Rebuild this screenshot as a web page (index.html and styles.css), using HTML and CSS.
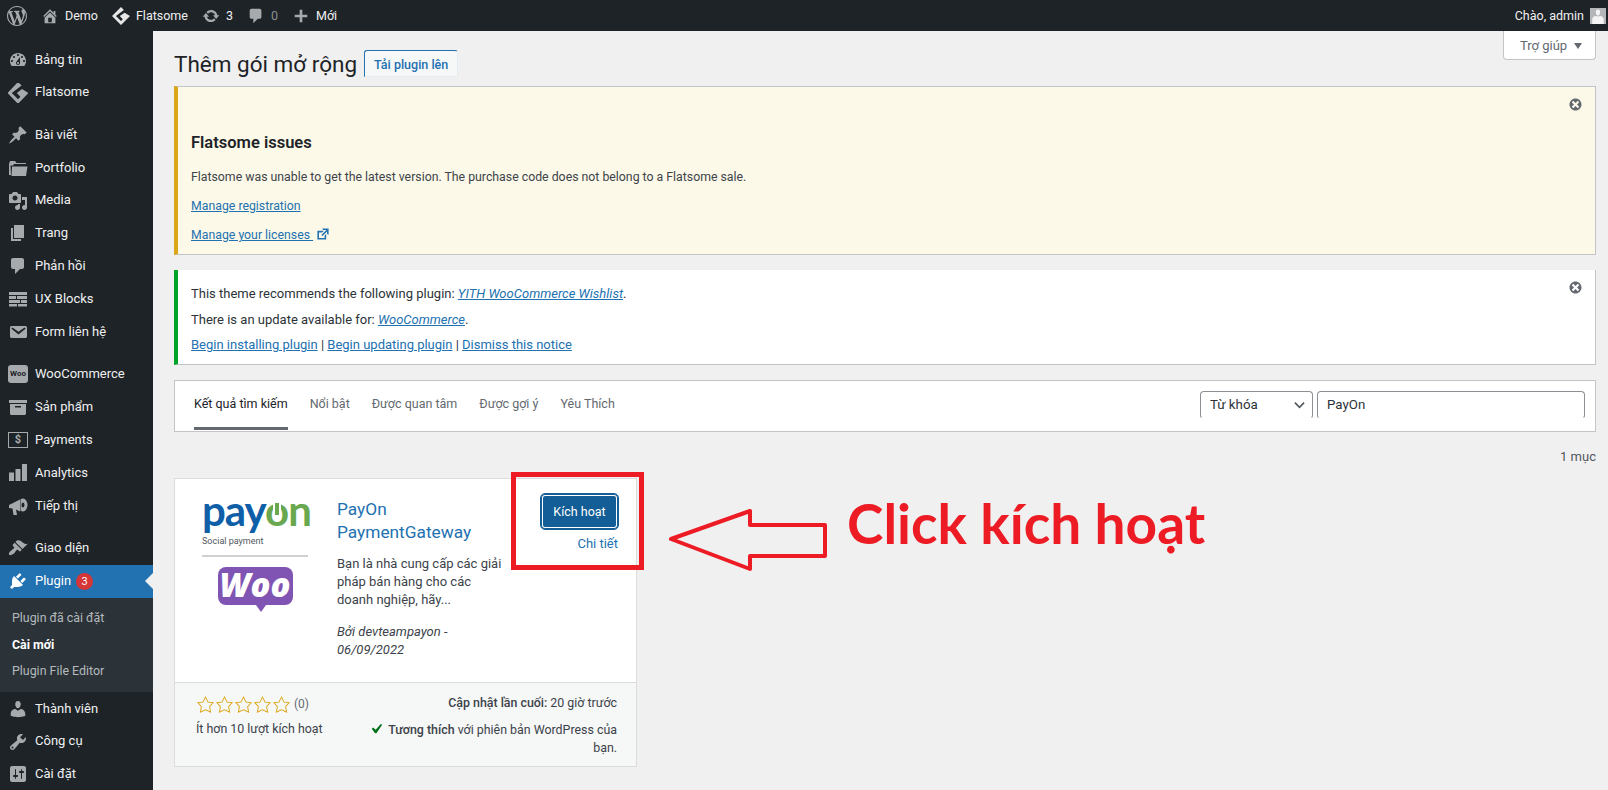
FILE: index.html
```html
<!DOCTYPE html>
<html lang="vi">
<head>
    <meta charset="UTF-8">
    <title>Thêm gói mở rộng</title>
    <link rel="stylesheet" href="styles.css">
</head>
<body>
    <!-- Top admin bar -->
    <header class="adminbar">
        <a class="bar-item bar-logo"><svg class="ico" viewBox="0 0 20 20"><path d="M20 10c0-5.51-4.49-10-10-10C4.48 0 0 4.49 0 10c0 5.52 4.48 10 10 10 5.51 0 10-4.48 10-10zM7.78 15.37L4.37 6.22c.55-.02 1.17-.08 1.17-.08.5-.06.44-1.13-.06-1.11 0 0-1.45.11-2.37.11-.18 0-.37 0-.58-.01C4.12 2.69 6.87 1.11 10 1.11c2.33 0 4.45.87 6.05 2.34-.68-.11-1.65.39-1.65 1.58 0 .74.45 1.36.9 2.1.35.61.55 1.36.55 2.46 0 1.49-1.4 5-1.4 5l-3.03-8.37c.54-.02.82-.17.82-.17.5-.05.44-1.25-.06-1.22 0 0-1.44.12-2.38.12-.87 0-2.33-.12-2.33-.12-.5-.03-.56 1.2-.06 1.22l.92.08 1.26 3.41zM17.41 10c.24-.64.74-1.87.43-4.25.7 1.29 1.05 2.71 1.05 4.25 0 3.29-1.73 6.24-4.4 7.78.97-2.59 1.94-5.2 2.92-7.78zM6.1 18.09C3.12 16.65 1.11 13.53 1.11 10c0-1.3.23-2.48.72-3.59C3.25 10.3 4.67 14.2 6.1 18.09zm4.03-6.63l2.58 6.98c-.86.29-1.76.45-2.71.45-.79 0-1.57-.11-2.29-.33.81-2.38 1.62-4.74 2.42-7.1z"/></svg></a>
        <a class="bar-item"><svg class="ico" viewBox="0 0 20 20"><path d="M16 8.5l1.53 1.53-1.06 1.06L10 4.62l-6.47 6.47-1.06-1.06L10 2.5l4 4v-2h2v4zm-6-2.46l6 5.99V18H4v-5.97zM12 17v-5H8v5h4z"/></svg>Demo</a>
        <a class="bar-item"><svg class="ico ico-light" viewBox="0 0 20 20"><path d="M10 0l3.2 3.2L4.4 10l5.6 5.6 2-2-3.4-3.6L14 6.4 20 10l-10 10L0 10z"/></svg>Flatsome</a>
        <a class="bar-item"><svg class="ico" viewBox="0 0 20 20"><path d="M10.2 3.28c3.53 0 6.43 2.61 6.92 6h2.08l-3.5 4-3.5-4h2.32c-.45-1.97-2.21-3.45-4.32-3.45-1.45 0-2.73.71-3.54 1.78L4.95 5.66C6.23 4.2 8.11 3.28 10.2 3.28zm-.4 13.44c-3.52 0-6.43-2.61-6.92-6H.8l3.5-4c1.17 1.33 2.33 2.67 3.5 4H5.48c.45 1.97 2.21 3.45 4.32 3.45 1.45 0 2.73-.71 3.54-1.78l1.71 1.95c-1.28 1.46-3.15 2.38-5.25 2.38z"/></svg>3</a>
        <a class="bar-item bar-dim"><svg class="ico" viewBox="0 0 20 20"><path d="M5 2h9c1.1 0 2 .9 2 2v7c0 1.1-.9 2-2 2h-2l-5 5v-5H5c-1.1 0-2-.9-2-2V4c0-1.1.9-2 2-2z"/></svg>0</a>
        <a class="bar-item"><svg class="ico" viewBox="0 0 20 20"><path d="M17 8.5v3h-5.5V17h-3v-5.5H3v-3h5.5V3h3v5.500z"/></svg>Mới</a>
        <a class="bar-user">Chào, admin<span class="avatar"><svg viewBox="0 0 20 20"><path d="M10 9.25c-2.27 0-2.73-3.44-2.73-3.44C7 4.02 7.82 2 9.97 2c2.16 0 2.98 2.02 2.71 3.81 0 0-.41 3.44-2.68 3.44zm0 1.5l2.72-.75c2.39 0 4.52 2.33 4.52 4.53V20H2.76v-5.47c0-2.25 1.94-4.48 4.47-4.48z"/></svg></span></a>
    </header>

    <div class="layout">
        <!-- Left menu -->
        <nav class="sidebar">
            <a class="menu-item"><svg class="ico" viewBox="0 0 20 20"><path d="M3.76 16h12.48c1.1-1.37 1.76-3.11 1.76-5 0-4.42-3.58-8-8-8s-8 3.58-8 8c0 1.89.66 3.63 1.76 5zM10 4c.55 0 1 .45 1 1s-.45 1-1 1-1-.45-1-1 .45-1 1-1zM6 6c.55 0 1 .45 1 1s-.45 1-1 1-1-.45-1-1 .45-1 1-1zm8 0c.55 0 1 .45 1 1s-.45 1-1 1-1-.45-1-1 .45-1 1-1zm-5.37 5.55L12 7v6c0 1.1-.9 2-2 2s-2-.9-2-2c0-.57.24-1.08.63-1.45zM4 10c.55 0 1 .45 1 1s-.45 1-1 1-1-.45-1-1 .45-1 1-1zm12 0c.55 0 1 .45 1 1s-.45 1-1 1-1-.45-1-1 .45-1 1-1zm-5 3c0-.55-.45-1-1-1s-1 .45-1 1 .45 1 1 1 1-.45 1-1z"/></svg>Bảng tin</a>
            <a class="menu-item"><svg class="ico" viewBox="0 0 20 20"><path d="M10 -1l3.6 3.6L3.8 10l6.2 6.2 2.4-2.4-3.6-3.8L14 6l6.5 4L10 20.8-.6 10z"/></svg>Flatsome</a>
            <div class="menu-sep"></div>
            <a class="menu-item"><svg class="ico" viewBox="0 0 20 20"><path d="M10.44 3.02l1.82-1.82 6.36 6.35-1.83 1.82c-1.05-.68-2.48-.57-3.41.36l-.75.75c-.92.93-1.04 2.35-.35 3.41l-1.83 1.82-2.41-2.41-2.8 2.79c-.42.42-3.38 2.71-3.8 2.29s1.86-3.39 2.28-3.81l2.79-2.79L4.1 9.36l1.83-1.82c1.05.69 2.48.57 3.4-.36l.75-.75c.93-.92 1.05-2.35.36-3.41z"/></svg>Bài viết</a>
            <a class="menu-item"><svg class="ico" viewBox="0 0 20 20"><path d="M1 6l1-3h5l1.5 2H18v1H6L5 7.5H2.5L3 17H1zM4 8.5h15.5L18 18H3.5z"/></svg>Portfolio</a>
            <a class="menu-item"><svg class="ico" viewBox="0 0 20 20"><path d="M13 11V4c0-.55-.45-1-1-1h-1.67L9 1H5L3.67 3H2c-.55 0-1 .45-1 1v7c0 .55.45 1 1 1h10c.55 0 1-.45 1-1zM7 4.5c1.38 0 2.5 1.12 2.5 2.5S8.38 9.5 7 9.5 4.5 8.38 4.5 7 5.62 4.5 7 4.5zM14 6h5v10.5c0 1.38-1.12 2.5-2.5 2.5S14 17.88 14 16.5s1.12-2.5 2.5-2.5c.17 0 .34.02.5.05V9h-3V6zm-4 8.05V13h2v3.5c0 1.38-1.12 2.5-2.5 2.5S7 17.88 7 16.5 8.12 14 9.5 14c.17 0 .34.02.5.05z"/></svg>Media</a>
            <a class="menu-item"><svg class="ico" viewBox="0 0 20 20"><path d="M6 15V2h10v13H6zm-1 1h8v2H3V5h2v11z"/></svg>Trang</a>
            <a class="menu-item"><svg class="ico" viewBox="0 0 20 20"><path d="M5 2h9c1.1 0 2 .9 2 2v7c0 1.1-.9 2-2 2h-2l-5 5v-5H5c-1.1 0-2-.9-2-2V4c0-1.1.9-2 2-2z"/></svg>Phản hồi</a>
            <a class="menu-item"><svg class="ico" viewBox="0 0 20 20"><path d="M1 3h18v3H1zM1 7h7v3H1zM9 7h10v3H9zM1 11h11v3H1zM13 11h6v3h-6zM1 15h8v2.500H1zM10 15h9v2.500h-9z"/></svg>UX Blocks</a>
            <a class="menu-item"><svg class="ico" viewBox="0 0 20 20"><path d="M3.870 4h13.250C18.370 4 19 4.590 19 5.790v8.420c0 1.190-.63 1.790-1.880 1.790H3.870c-1.250 0-1.880-.6-1.880-1.790V5.790c0-1.200.63-1.790 1.880-1.790zm6.620 8.600l6.740-5.530c.24-.2.43-.66.13-1.070-.29-.41-.82-.42-1.170-.17l-5.700 3.860L4.800 5.830c-.35-.25-.88-.24-1.170.17-.3.41-.11.87.13 1.070z"/></svg>Form liên hệ</a>
            <div class="menu-sep"></div>
            <a class="menu-item"><span class="woo-ico">Woo</span>WooCommerce</a>
            <a class="menu-item"><svg class="ico" viewBox="0 0 20 20"><path d="M19 3v3H1V3h18zM2 7h16v9.500c0 .83-.67 1.500-1.500 1.500h-13c-.83 0-1.500-.67-1.500-1.500V7zm5 2v1.500h6V9H7z"/></svg>Sản phẩm</a>
            <a class="menu-item"><span class="pay-ico">$</span>Payments</a>
            <a class="menu-item"><svg class="ico" viewBox="0 0 20 20"><path d="M19 18V1h-5v17h5zm-6.500 0V6h-5v12h5zM6 18V9.500H1V18h5z"/></svg>Analytics</a>
            <a class="menu-item"><svg class="ico" viewBox="0 0 20 20"><path d="M1 9l11-5.500v12L8 13.500 9 19H5.500L4.500 12.500 1 12zM15 2.500a4.500 6.500 0 0 1 0 13 4.500 6.500 0 0 1-2.500-1V3.500a4.500 6.500 0 0 1 2.500-1zm0 4a1.500 2.500 0 1 0 0 5 1.500 2.500 0 0 0 0-5z"/></svg>Tiếp thị</a>
            <div class="menu-sep"></div>
            <a class="menu-item"><svg class="ico" viewBox="0 0 20 20"><path d="M14.480 11.060L7.410 3.990l1.500-1.500c.5-.56 2.300-.47 3.510.32 1.210.8 1.430 1.280 2.910 2.100 1.180.64 2.450 1.260 4.450.85zm-.71.71L6.700 4.700 4.930 6.470c-.39.39-.39 1.020 0 1.410l1.060 1.060c.39.39.39 1.030 0 1.420-.6.6-1.430 1.110-2.210 1.690-.35.26-.7.53-1.010.84C1.430 13.230.4 16.100 1.170 16.870c.77.77 3.640-.26 5-1.600.31-.31.58-.66.84-1.010.58-.78 1.090-1.610 1.690-2.210.39-.39 1.030-.39 1.420 0l1.060 1.060c.39.39 1.020.39 1.410 0z"/></svg>Giao diện</a>
            <a class="menu-item active"><svg class="ico" viewBox="0 0 20 20"><path d="M13.110 4.360L9.870 7.600 8 5.730l3.240-3.240c.35-.34 1.050-.2 1.560.32.52.51.66 1.210.31 1.550zm-8 1.770l.91-1.120 9.010 9.010-1.190.84c-.71.71-2.630 1.160-3.820 1.160H6.140L4.900 17.260c-.59.59-1.540.59-2.120 0-.59-.58-.59-1.530 0-2.120l1.240-1.240v-3.880c0-1.130.4-3.190 1.090-3.890zm7.260 3.970l3.240-3.240c.34-.35 1.040-.21 1.550.31.52.51.66 1.210.31 1.550l-3.240 3.250z"/></svg>Plugin<span class="badge">3</span></a>
            <div class="submenu">
                <a class="sub-item">Plugin đã cài đặt</a>
                <a class="sub-item current">Cài mới</a>
                <a class="sub-item">Plugin File Editor</a>
            </div>
            <a class="menu-item"><svg class="ico" viewBox="0 0 20 20"><path d="M10 9.250c-2.270 0-2.730-3.440-2.730-3.440C7 4.020 7.820 2 9.970 2c2.160 0 2.980 2.020 2.710 3.810 0 0-.41 3.440-2.680 3.440zm0 2.570L12.720 10c2.390 0 4.520 2.330 4.520 4.530v2.490s-3.650 1.130-7.240 1.130c-3.650 0-7.240-1.130-7.240-1.130v-2.490c0-2.250 1.940-4.480 4.470-4.480z"/></svg>Thành viên</a>
            <a class="menu-item"><svg class="ico" viewBox="0 0 20 20"><path d="M16.680 9.770c-1.340 1.340-3.300 1.670-4.950.99l-5.410 6.520c-.99.99-2.590.99-3.580 0s-.99-2.590 0-3.570l6.520-5.420c-.68-1.650-.35-3.610.99-4.950 1.280-1.280 3.120-1.620 4.720-1.060l-2.890 2.890 2.820 2.820 2.860-2.870c.53 1.580.18 3.390-1.080 4.650zM3.810 16.210c.4.39 1.040.39 1.430 0 .4-.4.4-1.040 0-1.430-.39-.4-1.030-.4-1.430 0-.39.39-.39 1.030 0 1.430z"/></svg>Công cụ</a>
            <a class="menu-item"><svg class="ico" viewBox="0 0 20 20"><path d="M18 16V4c0-1.100-.9-2-2-2H4c-1.100 0-2 .9-2 2v12c0 1.100.9 2 2 2h12c1.100 0 2-.9 2-2zM8 11h1c.55 0 1 .45 1 1s-.45 1-1 1H8v1.500c0 .28-.22.5-.5.5s-.5-.22-.5-.5V13H6c-.55 0-1-.45-1-1s.45-1 1-1h1V5.500c0-.28.22-.5.5-.5s.5.22.5.5V11zm5-2h-1c-.55 0-1-.45-1-1s.45-1 1-1h1V5.500c0-.28.22-.5.5-.5s.5.22.5.5V7h1c.55 0 1 .45 1 1s-.45 1-1 1h-1v5.500c0 .28-.22.5-.5.5s-.5-.22-.5-.5V9z"/></svg>Cài đặt</a>
        </nav>

        <main class="content">
            <div class="page-head">
                <h1>Thêm gói mở rộng</h1>
                <a class="upload-btn">Tải plugin lên</a>
                <div class="help-tab">Trợ giúp<span class="help-arrow"></span></div>
            </div>

            <div class="notice notice-warning">
                <svg class="dismiss" viewBox="0 0 20 20"><path d="M10 2c4.420 0 8 3.580 8 8s-3.580 8-8 8-8-3.580-8-8 3.580-8 8-8zm5 11l-3-3 3-3-2-2-3 3-3-3-2 2 3 3-3 3 2 2 3-3 3 3z"/></svg>
                <h3>Flatsome issues</h3>
                <p>Flatsome was unable to get the latest version. The purchase code does not belong to a Flatsome sale.</p>
                <p><a>Manage registration</a></p>
                <p><a>Manage your licenses </a><svg class="ext" viewBox="0 0 20 20"><path d="M9 3h8v8l-2-1V6.920l-5.600 5.590-1.410-1.410L14.080 5H10zm3 12v-3l2-2v7H3V6h8L9 8H5v7h7z"/></svg></p>
            </div>

            <div class="notice notice-success">
                <svg class="dismiss" viewBox="0 0 20 20"><path d="M10 2c4.420 0 8 3.580 8 8s-3.580 8-8 8-8-3.580-8-8 3.580-8 8-8zm5 11l-3-3 3-3-2-2-3 3-3-3-2 2 3 3-3 3 2 2 3-3 3 3z"/></svg>
                <p>This theme recommends the following plugin: <a><em>YITH WooCommerce Wishlist</em></a>.</p>
                <p>There is an update available for: <a><em>WooCommerce</em></a>.</p>
                <p><a>Begin installing plugin</a> | <a>Begin updating plugin</a> | <a>Dismiss this notice</a></p>
            </div>

            <div class="filter-bar">
                <ul class="tabs">
                    <li class="tab current">Kết quả tìm kiếm</li>
                    <li class="tab">Nổi bật</li>
                    <li class="tab">Được quan tâm</li>
                    <li class="tab">Được gợi ý</li>
                    <li class="tab">Yêu Thích</li>
                </ul>
                <div class="search">
                    <div class="field select">Từ khóa<svg class="chev" viewBox="0 0 12 8"><path d="M1 1.500l5 5 5-5" fill="none" stroke="#50575e" stroke-width="1.800"/></svg></div>
                    <div class="field input">PayOn</div>
                </div>
            </div>

            <div class="count">1 mục</div>

            <div class="card">
                <div class="card-top">
                    <div class="logo">
                        <div class="payon"><span class="pay">pay</span><span class="on"><span class="on-o">o</span>n</span></div>
                        <div class="social">Social payment</div>
                        <div class="logo-rule"></div>
                        <div class="woo-bubble">Woo</div>
                    </div>
                    <div class="card-info">
                        <h3>PayOn<br>PaymentGateway</h3>
                        <p>Bạn là nhà cung cấp các giải pháp bán hàng cho các doanh nghiệp, hãy...</p>
                        <p class="author">Bởi devteampayon -<br>06/09/2022</p>
                    </div>
                    <div class="card-actions">
                        <a class="activate">Kích hoạt</a>
                        <a class="details">Chi tiết</a>
                    </div>
                </div>
                <div class="card-foot">
                    <div>
                        <div class="stars">
                            <svg viewBox="0 0 20 20"><path d="M10 1L7 7l-6 .75 4.130 4.620L4 19l6-3 6 3-1.120-6.630L19 7.750 13 7zm0 2.240l2.340 4.690 4.650.58-3.180 3.560.87 5.150L10 14.880l-4.680 2.340.87-5.150-3.180-3.560 4.650-.58z"/></svg>
                            <svg viewBox="0 0 20 20"><path d="M10 1L7 7l-6 .75 4.130 4.620L4 19l6-3 6 3-1.120-6.630L19 7.750 13 7zm0 2.240l2.340 4.690 4.650.58-3.180 3.560.87 5.150L10 14.880l-4.680 2.340.87-5.150-3.180-3.560 4.650-.58z"/></svg>
                            <svg viewBox="0 0 20 20"><path d="M10 1L7 7l-6 .75 4.130 4.620L4 19l6-3 6 3-1.120-6.630L19 7.750 13 7zm0 2.240l2.340 4.690 4.650.58-3.180 3.560.87 5.150L10 14.880l-4.680 2.340.87-5.150-3.180-3.560 4.650-.58z"/></svg>
                            <svg viewBox="0 0 20 20"><path d="M10 1L7 7l-6 .75 4.130 4.620L4 19l6-3 6 3-1.120-6.630L19 7.750 13 7zm0 2.240l2.340 4.690 4.650.58-3.180 3.560.87 5.150L10 14.880l-4.680 2.340.87-5.150-3.180-3.560 4.650-.58z"/></svg>
                            <svg viewBox="0 0 20 20"><path d="M10 1L7 7l-6 .75 4.130 4.620L4 19l6-3 6 3-1.120-6.630L19 7.750 13 7zm0 2.240l2.340 4.690 4.650.58-3.180 3.560.87 5.150L10 14.880l-4.680 2.340.87-5.150-3.180-3.560 4.650-.58z"/></svg>
                            <span class="rating-count">(0)</span>
                        </div>
                        <div class="installs">Ít hơn 10 lượt kích hoạt</div>
                    </div>
                    <div class="foot-right">
                        <div class="updated"><strong>Cập nhật lần cuối:</strong> 20 giờ trước</div>
                        <div class="compat"><svg class="check" viewBox="0 0 20 20"><path d="M14.830 4.890l1.340.94-5.810 8.380H9.020L5.780 9.670l1.340-1.250 2.570 2.400z"/></svg><strong>Tương thích</strong> với phiên bản WordPress của bạn.</div>
                    </div>
                </div>
            </div>
        </main>
    </div>

    <!-- Red annotation drawn over the screenshot -->
    <div class="mark-frame"></div>
    <svg class="mark-arrow" viewBox="0 0 160 64"><path d="M2 32L81 4v14h75v31H81v13z" fill="none" stroke="#ed1c24" stroke-width="4" stroke-linejoin="round"/></svg>
    <div class="mark-text">Click kích hoạt</div>
</body>
</html>
```

FILE: styles.css
```css
* {
    box-sizing: border-box;
}
html, body {
    height: 100%;
}
body {
    margin: 0;
    position: relative;
    overflow: hidden;
    background-color: #f0f0f0;
    color: #3c434a;
    font-family: Roboto, "Liberation Sans", sans-serif;
    font-size: 13px;
    line-height: 1.4;
}
a {
    color: #2271b1;
}
.ico {
    width: 20px;
    height: 20px;
    flex: none;
    fill: #a7aaad;
}

/* Admin bar */
.adminbar {
    height: 31px;
    background-color: #1d2327;
    color: #f0f0f1;
    display: flex;
    align-items: center;
    padding-left: 7px;
    font-size: 12.500px;
}
.bar-item {
    display: flex;
    align-items: center;
    gap: 6px;
    color: #f0f0f1;
    margin-right: 14px;
}
.bar-item .ico {
    width: 18px;
    height: 18px;
}
.bar-logo .ico {
    width: 20px;
    height: 20px;
}
.bar-item .ico-light {
    fill: #e6e6e6;
}
.bar-dim {
    color: #8c8f94;
}
.bar-user {
    margin-left: auto;
    display: flex;
    align-items: center;
    gap: 6px;
    color: #f0f0f1;
    padding-right: 2px;
}
.avatar {
    width: 16px;
    height: 16px;
    background-color: #b4b6b8;
    display: block;
}
.avatar svg {
    display: block;
    fill: #f4f4f4;
}

.layout {
    display: flex;
    height: 759px;
}

/* Left menu */
.sidebar {
    width: 153px;
    flex: none;
    background-color: #1d2327;
    padding-top: 12.200px;
}
.menu-item {
    height: 32.900px;
    display: flex;
    align-items: center;
    gap: 7px;
    padding-left: 8px;
    color: #f0f0f1;
    position: relative;
}
.menu-sep {
    height: 9.400px;
}
.menu-item.active {
    background-color: #2271b1;
    color: #fff;
}
.menu-item.active .ico {
    fill: #fff;
}
.menu-item.active::after {
    content: "";
    position: absolute;
    right: 0;
    top: 50%;
    margin-top: -8px;
    border: 8px solid transparent;
    border-right-color: #f0f0f0;
    border-left-width: 0;
}
.woo-ico {
    width: 20px;
    height: 18px;
    flex: none;
    border-radius: 3px;
    background-color: #a7aaad;
    color: #1d2327;
    font-size: 8px;
    font-weight: 700;
    line-height: 18px;
    text-align: center;
}
.pay-ico {
    width: 20px;
    height: 16px;
    flex: none;
    border: 1.500px solid #a7aaad;
    color: #a7aaad;
    font-size: 11px;
    font-weight: 700;
    line-height: 13px;
    text-align: center;
}
.badge {
    width: 17px;
    height: 17px;
    margin-left: -2px;
    border-radius: 50%;
    background-color: #d63638;
    color: #fff;
    font-size: 11px;
    line-height: 17px;
    text-align: center;
}
.submenu {
    background-color: #2c3338;
    padding: 7.250px 0;
}
.sub-item {
    display: block;
    height: 26.700px;
    line-height: 26.700px;
    padding-left: 12px;
    color: #b4b9be;
    font-size: 12.400px;
}
.sub-item.current {
    color: #fff;
    font-weight: 700;
}

/* Main column */
.content {
    flex: 1;
    padding: 0 12px 0 21px;
}
.page-head {
    height: 55px;
    display: flex;
    align-items: flex-start;
}
.page-head h1 {
    margin: 17px 0 0;
    font-size: 22.500px;
    font-weight: 400;
    line-height: 32px;
    color: #1d2327;
}
.upload-btn {
    margin: 19px 0 0 7px;
    height: 27px;
    line-height: 27px;
    padding: 0 9px;
    font-weight: 500;
    font-size: 12.500px;
    background-color: #f6f7f7;
    border: 1px solid #2271b1;
    border-right-color: #e4ecf2;
    border-bottom-color: #e4ecf2;
    border-radius: 3px 3px 0 0;
}
.help-tab {
    margin-left: auto;
    width: 93px;
    height: 29px;
    background-color: #fff;
    border: 1px solid #c3c4c7;
    border-top: 0;
    border-radius: 0 0 4px 4px;
    padding: 2px 0 0 16px;
    line-height: 28px;
    color: #646970;
    display: flex;
    align-items: center;
    gap: 7px;
}
.help-arrow {
    border: 4.500px solid transparent;
    border-top: 6px solid #646970;
    border-bottom: 0;
}
.notice {
    position: relative;
    border: 1px solid #c3c4c7;
    border-left-width: 4px;
    background-color: #fff;
    padding-left: 13px;
}
.notice p {
    margin: 0;
}
.notice a {
    text-decoration: underline;
}
.notice-warning {
    height: 169px;
    background-color: #fcf9e8;
    border-left-color: #dba617;
    padding-top: 44px;
}
.notice-warning h3 {
    margin: 0 0 15px;
    font-size: 16.500px;
    font-weight: 600;
    line-height: 23px;
    color: #1d2327;
}
.notice-warning p {
    height: 28.500px;
    font-size: 12.300px;
}
.notice-success {
    margin-top: 15px;
    height: 95px;
    border-top: 0;
    border-left-color: #00a32a;
    padding-top: 14px;
}
.notice-success p {
    height: 25.500px;
    line-height: 20px;
    color: #2c3338;
}
.dismiss {
    position: absolute;
    top: 10px;
    right: 12px;
    width: 15px;
    height: 15px;
    fill: #646970;
}
.ext {
    width: 16px;
    height: 16px;
    margin-left: 2px;
    vertical-align: -3px;
    fill: #2271b1;
}
.filter-bar {
    margin-top: 15px;
    height: 52px;
    background-color: #fff;
    border: 1px solid #c3c4c7;
    display: flex;
    justify-content: space-between;
    padding: 0 10px 0 19px;
}
.tabs {
    margin: 0;
    padding: 0;
    list-style: none;
    display: flex;
    gap: 22px;
    font-size: 12.500px;
}
.tab {
    height: 49px;
    padding-top: 14px;
    color: #646970;
}
.tab.current {
    color: #1d2327;
    border-bottom: 3px solid #646970;
}
.search {
    display: flex;
    gap: 4px;
    padding-top: 10px;
}
.field {
    height: 28px;
    border: 1px solid #8c8f94;
    border-bottom-color: transparent;
    border-radius: 4px;
    background-color: #fff;
    color: #2c3338;
    font-size: 13.300px;
    line-height: 26px;
}
.select {
    width: 113px;
    padding-left: 9px;
    display: flex;
    align-items: center;
    justify-content: space-between;
}
.chev {
    width: 11px;
    height: 8px;
    margin-right: 7px;
}
.input {
    width: 268px;
    padding-left: 9px;
}
.count {
    margin-top: 15px;
    height: 31px;
    line-height: 19px;
    text-align: right;
    color: #50575e;
}

/* Plugin card */
.card {
    width: 463px;
    height: 289px;
    background-color: #fff;
    border: 1px solid #dcdcde;
    display: flex;
    flex-direction: column;
}
.card-top {
    flex: 1;
    display: flex;
    padding: 15px 18px 0 27px;
}
.logo {
    width: 106px;
    flex: none;
    margin-top: 1px;
}
.payon {
    font-family: Lato, sans-serif;
    font-size: 42px;
    font-weight: 700;
    line-height: 30px;
    letter-spacing: -1px;
    white-space: nowrap;
}
.pay {
    color: #0f5fa8;
}
.on {
    color: #6aa84f;
}
.on-o {
    position: relative;
}
.on-o::after {
    content: "";
    position: absolute;
    left: 50%;
    top: 18px;
    width: 4px;
    height: 12px;
    margin-left: -2px;
    background-color: #6aa84f;
    box-shadow: 0 0 0 2px #fff;
}
.social {
    margin-top: 10px;
    font-size: 9px;
    line-height: 12px;
    color: #50575e;
}
.logo-rule {
    height: 2px;
    background-color: #d0d0d0;
    margin-top: 8px;
}
.woo-bubble {
    position: relative;
    width: 75px;
    height: 38px;
    margin: 10px auto 0;
    border-radius: 8px;
    background-color: #7f54b3;
    color: #fff;
    font-family: "Open Sans", sans-serif;
    font-size: 33px;
    font-weight: 800;
    font-style: italic;
    line-height: 36px;
    text-align: center;
}
.woo-bubble::after {
    content: "";
    position: absolute;
    left: 38px;
    bottom: -7px;
    border: 5px solid transparent;
    border-top: 7px solid #7f54b3;
    border-bottom: 0;
}
.card-info {
    width: 172px;
    flex: none;
    margin-left: 29px;
}
.card-info h3 {
    margin: 4px 0 11px;
    font-size: 17.300px;
    font-weight: 400;
    line-height: 23px;
    color: #2271b1;
}
.card-info p {
    margin: 0 0 13px;
    line-height: 18.200px;
}
.author {
    font-style: italic;
}
.card-actions {
    flex: 1;
    text-align: right;
}
.activate {
    display: block;
    width: 77px;
    height: 35px;
    margin-left: auto;
    border-radius: 4px;
    background-color: #135e96;
    box-shadow: inset 0 0 0 1px #135e96, inset 0 0 0 2px #fff;
    outline: 1px solid #135e96;
    color: #fff;
    font-size: 12.500px;
    line-height: 35px;
    text-align: center;
}
.details {
    display: block;
    margin-top: 6px;
}
.card-foot {
    height: 84px;
    background-color: #f6f7f7;
    border-top: 1px solid #dcdcde;
    display: flex;
    justify-content: space-between;
    padding: 11px 19px 0 21px;
    font-size: 12.400px;
}
.stars {
    display: flex;
    align-items: center;
    height: 20px;
}
.stars svg {
    width: 19px;
    height: 19px;
    fill: #dba617;
}
.rating-count {
    margin-left: 3px;
    color: #646970;
    font-size: 12px;
}
.installs {
    margin-top: 6px;
}
.foot-right {
    width: 262px;
    margin-top: -1px;
    text-align: right;
}
.foot-right strong {
    font-weight: 500;
}
.updated {
    height: 20px;
    line-height: 20px;
}
.compat {
    margin-top: 6px;
    line-height: 17px;
}
.check {
    width: 20px;
    height: 20px;
    margin-right: 2px;
    vertical-align: -5px;
    fill: #007017;
}

/* Red annotation */
.mark-frame {
    position: absolute;
    left: 511px;
    top: 472px;
    width: 133px;
    height: 98px;
    border: 5px solid #ed1c24;
}
.mark-arrow {
    position: absolute;
    left: 669px;
    top: 507px;
    width: 160px;
    height: 64px;
}
.mark-text {
    position: absolute;
    left: 847px;
    top: 488px;
    font-family: Lato, sans-serif;
    font-size: 55px;
    font-weight: 700;
    line-height: 70px;
    color: #ed1c24;
    white-space: nowrap;
}
```
